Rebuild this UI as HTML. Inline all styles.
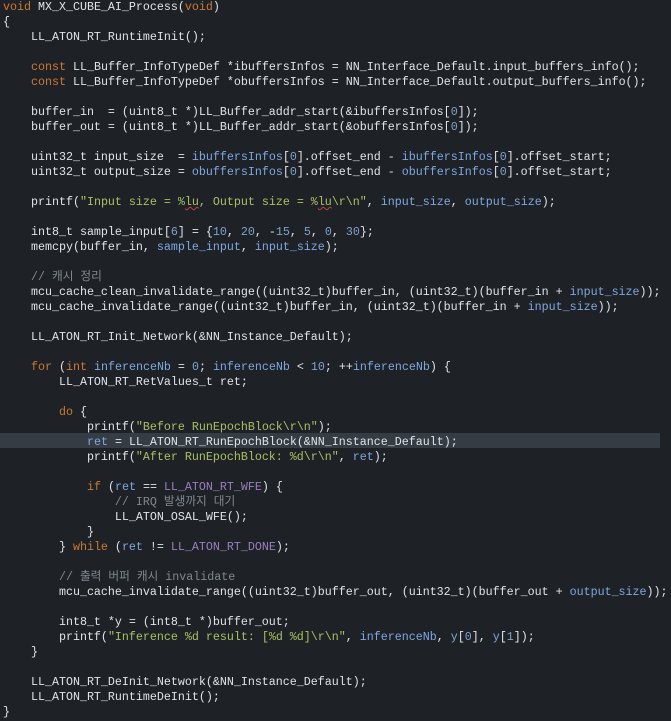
<!DOCTYPE html>
<html><head><meta charset="utf-8"><style>
html,body{margin:0;padding:0;background:#1e2227;width:671px;height:721px;overflow:hidden}
pre{margin:0;padding:0 0 0 3px;font-family:"Liberation Mono","Noto Sans CJK KR",monospace;font-size:11.67px;line-height:15px;color:#e0e4ea;position:relative}
.hl{position:absolute;left:0;top:433px;width:660px;height:15px;background:#363c43}
.k{color:#cc7832}.v{color:#7fa7e0}.s{color:#a8c064}.m{color:#9b7fc0}.n{color:#7fa2cc}.c{color:#808890}
.u{text-decoration:underline wavy #c04040;text-decoration-thickness:1px}
</style></head><body><div class="hl"></div><pre><span class="k">void</span> MX_X_CUBE_AI_Process(<span class="k">void</span>)
{
    LL_ATON_RT_RuntimeInit();

    <span class="k">const</span> LL_Buffer_InfoTypeDef *ibuffersInfos = NN_Interface_Default.input_buffers_info();
    <span class="k">const</span> LL_Buffer_InfoTypeDef *obuffersInfos = NN_Interface_Default.output_buffers_info();

    buffer_in  = (uint8_t *)LL_Buffer_addr_start(&amp;ibuffersInfos[<span class="n">0</span>]);
    buffer_out = (uint8_t *)LL_Buffer_addr_start(&amp;obuffersInfos[<span class="n">0</span>]);

    uint32_t input_size  = <span class="v">ibuffersInfos</span>[<span class="n">0</span>].offset_end - <span class="v">ibuffersInfos</span>[<span class="n">0</span>].offset_start;
    uint32_t output_size = <span class="v">obuffersInfos</span>[<span class="n">0</span>].offset_end - <span class="v">obuffersInfos</span>[<span class="n">0</span>].offset_start;

    printf(<span class="s">"Input size = %<span class="u">lu</span>, Output size = %<span class="u">lu</span>\r\n"</span>, <span class="v">input_size</span>, <span class="v">output_size</span>);

    int8_t sample_input[<span class="n">6</span>] = {<span class="n">10</span>, <span class="n">20</span>, -<span class="n">15</span>, <span class="n">5</span>, <span class="n">0</span>, <span class="n">30</span>};
    memcpy(buffer_in, <span class="v">sample_input</span>, <span class="v">input_size</span>);

    <span class="c">// 캐시 정리</span>
    mcu_cache_clean_invalidate_range((uint32_t)buffer_in, (uint32_t)(buffer_in + <span class="v">input_size</span>));
    mcu_cache_invalidate_range((uint32_t)buffer_in, (uint32_t)(buffer_in + <span class="v">input_size</span>));

    LL_ATON_RT_Init_Network(&amp;NN_Instance_Default);

    <span class="k">for</span> (<span class="k">int</span> <span class="v">inferenceNb</span> = <span class="n">0</span>; <span class="v">inferenceNb</span> &lt; <span class="n">10</span>; ++<span class="v">inferenceNb</span>) {
        LL_ATON_RT_RetValues_t ret;

        <span class="k">do</span> {
            printf(<span class="s">"Before RunEpochBlock\r\n"</span>);
            <span class="v">ret</span> = LL_ATON_RT_RunEpochBlock(&amp;NN_Instance_Default);
            printf(<span class="s">"After RunEpochBlock: %d\r\n"</span>, <span class="v">ret</span>);

            <span class="k">if</span> (<span class="v">ret</span> == <span class="m">LL_ATON_RT_WFE</span>) {
                <span class="c">// IRQ 발생까지 대기</span>
                LL_ATON_OSAL_WFE();
            }
        } <span class="k">while</span> (<span class="v">ret</span> != <span class="m">LL_ATON_RT_DONE</span>);

        <span class="c">// 출력 버퍼 캐시 invalidate</span>
        mcu_cache_invalidate_range((uint32_t)buffer_out, (uint32_t)(buffer_out + <span class="v">output_size</span>));

        int8_t *y = (int8_t *)buffer_out;
        printf(<span class="s">"Inference %d result: [%d %d]\r\n"</span>, <span class="v">inferenceNb</span>, <span class="v">y</span>[<span class="n">0</span>], <span class="v">y</span>[<span class="n">1</span>]);
    }

    LL_ATON_RT_DeInit_Network(&amp;NN_Instance_Default);
    LL_ATON_RT_RuntimeDeInit();
}</pre></body></html>
